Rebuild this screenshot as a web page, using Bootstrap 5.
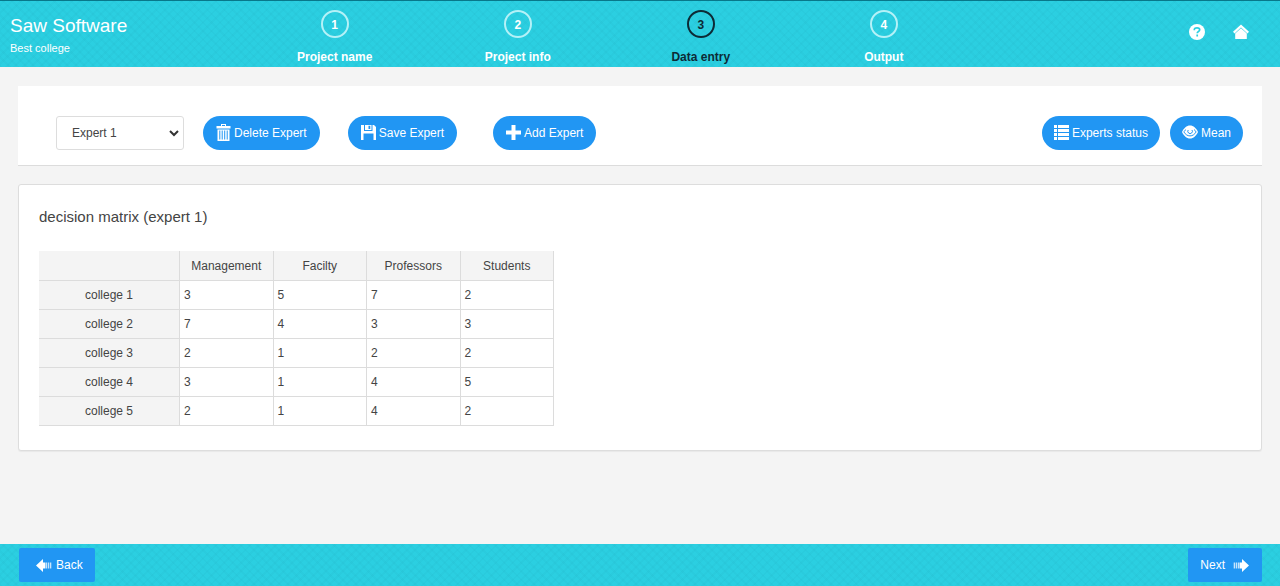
<!DOCTYPE html>
<html lang="en">
<head>
<meta charset="utf-8">
<meta name="viewport" content="width=device-width, initial-scale=1">
<title>Saw Software - Data entry</title>
<link href="https://cdn.jsdelivr.net/npm/bootstrap@5.3.0/dist/css/bootstrap.min.css" rel="stylesheet">
<style>
body{font-family:"Liberation Sans",Arial,sans-serif;font-size:12px;line-height:18px;color:#444;background:#f4f4f4}
.pattern{background-color:#2bcfe1;background-image:repeating-linear-gradient(45deg,rgba(0,90,110,.03) 0 2px,transparent 2px 6px),repeating-linear-gradient(-45deg,rgba(0,90,110,.03) 0 2px,transparent 2px 6px)}
.topbar{border-top:1px solid #08788a;min-height:67px}
.brand{width:19%;padding:13px 0 0 10px}
.brand h1{font-size:19px;line-height:23px;margin:0;font-weight:400}
.brand p{font-size:11px;line-height:22px;margin:0}
.steps{width:57.2%;padding-top:9px}
.steps a{color:#fff;font-weight:700;text-decoration:none}
.steps a.current{color:#0d2b36}
.ring{width:28px;height:28px;border:2px solid #b4f1f7;border-radius:50%;line-height:26px;margin-bottom:10px}
.current .ring{border-color:#0d2b36}
.tools{padding:23px 31px 0 0;gap:28px}
svg{fill:currentColor;display:block;flex:none}
.page{padding:19px 18px 60px}
.toolbar{padding:30px 19px 15px 38px;border-bottom:1px solid #dcdcdc;margin-bottom:18px}
.toolbar .form-select{width:128px;height:34px;padding:0 28px 0 15px;font-size:12px;color:#444;border-color:#ddd;border-radius:3px;margin-right:19px;background-position:right 4px center;background-size:10px 10px;background-image:url("data:image/svg+xml,%3Csvg xmlns='http://www.w3.org/2000/svg' viewBox='0 0 10 10'%3E%3Cpath d='M1 3l4 4 4-4' fill='none' stroke='%23333' stroke-width='2'/%3E%3C/svg%3E")}
.btn{--bs-btn-color:#fff;--bs-btn-bg:#2196f3;--bs-btn-hover-color:#fff;--bs-btn-hover-bg:#1584dd;--bs-btn-font-size:12px;--bs-btn-line-height:18px;--bs-btn-border-width:0;height:34px;display:inline-flex;align-items:center;justify-content:center;gap:3px;white-space:nowrap;--bs-btn-padding-x:12px;--bs-btn-padding-y:0}
.edit-actions .btn{--bs-btn-padding-x:13px}
.toolbar .btn svg{margin-top:-2px}
.edit-actions{gap:28px}
.view-actions{gap:10px}
.panel{border:1px solid #ddd;border-radius:3px;box-shadow:0 1px 1px rgba(0,0,0,.05);padding:20px 19px 24px 20px}
.panel h2{font-size:15px;line-height:24px;font-weight:400;margin:0 0 22px}
.matrix{width:515px;table-layout:fixed;border-collapse:separate;border-spacing:0;margin:0}
.matrix th,.matrix td{height:29px;padding:0 4px;border-right:1px solid #dcdcdc;border-bottom:1px solid #dcdcdc}
.matrix thead th{height:30px}
.matrix th{font-weight:400;text-align:center;background:#f4f4f4}
.matrix th:first-child{width:141px}
.bottombar{padding:4px 18px 4px 19px}
.bottombar .btn{--bs-btn-border-radius:2px}
</style>
</head>
<body>
<header class="topbar pattern d-flex text-white">
  <div class="brand"><h1>Saw Software</h1><p>Best college</p></div>
  <nav class="steps d-flex text-center" aria-label="Project steps">
    <a class="col-3" href="#name"><div class="ring mx-auto">1</div>Project name</a>
    <a class="col-3" href="#info"><div class="ring mx-auto">2</div>Project info</a>
    <a class="col-3 current" href="#entry" aria-current="step"><div class="ring mx-auto">3</div>Data entry</a>
    <a class="col-3" href="#output"><div class="ring mx-auto">4</div>Output</a>
  </nav>
  <div class="tools d-flex ms-auto">
    <a class="text-white" href="#help" aria-label="Help"><svg width="16" height="16" viewBox="0 0 16 16"><circle cx="8" cy="8" r="8"/><path d="M5.3 6.2V5.8C5.3 4.4 6.5 3.8 8 3.8s2.7.7 2.7 2c0 1.7-2.5 1.6-2.500 3.400M8.200 10.500v2" fill="none" stroke="#2bcfe1" stroke-width="1.7"/></svg></a>
    <a class="text-white" href="#home" aria-label="Home"><svg width="16" height="16" viewBox="0 0 16 16"><path d="M8 .5 16 7.800l-1.500 1.600L8 3.500 1.500 9.400 0 7.800zM8 4.200l5.800 5.300V15H2.200V9.500z"/></svg></a>
  </div>
</header>
<main class="page">
  <section class="toolbar bg-white d-flex align-items-center">
    <select class="form-select" aria-label="Expert"><option>Expert 1</option></select>
    <div class="edit-actions d-flex me-auto">
      <button class="btn rounded-pill" type="button"><svg width="15" height="17" viewBox="0 0 15 17"><path d="M5 0h5v2h4.500v2.500H.5V2H5zm1 1v1h3V1zM1.500 5.500h12V17h-12zM3.300 6.500v9h1v-9zm2.400 0v9h1v-9zm2.500 0v9h1v-9zm2.500 0v9h1v-9z" fill-rule="evenodd"/></svg>Delete Expert</button>
      <button class="btn rounded-pill" type="button"><svg width="15" height="15" viewBox="0 0 15 15"><path d="M0 0h3v6h8.500V0H13l2 2v13h-2.500V8.500h-10V15H0zm4 0h6.500v5H4zm3.500.8v3.200h1.800V.8z" fill-rule="evenodd"/></svg>Save Expert</button>
      <button class="btn rounded-pill ms-2" type="button"><svg width="15" height="15" viewBox="0 0 15 15"><path d="M5.500 0h4v5.500H15v4H9.500V15h-4V9.500H0v-4h5.500z"/></svg>Add Expert</button>
    </div>
    <div class="view-actions d-flex">
      <button class="btn rounded-pill" type="button"><svg width="15" height="15" viewBox="0 0 15 15"><path d="M0 0h3v3H0zm4 0h11v3H4zM0 4h3v3H0zm4 0h11v3H4zM0 8h3v3H0zm4 0h11v3H4zM0 12h3v3H0zm4 0h11v3H4z"/></svg>Experts status</button>
      <button class="btn rounded-pill" type="button"><svg width="16" height="14" viewBox="0 0 16 14"><path d="M0 7C2 3 4.500.5 8 .5s6 2.500 8 6.500c-2 4-4.500 6.500-8 6.500S2 11 0 7"/><path d="M4 4.600C2.800 5.300 2.200 6.200 1.900 7c1.600 2.500 3.600 3.900 6.100 3.900s4.500-1.400 6.100-3.900c-.3-.8-.9-1.700-2.100-2.400" fill="none" stroke="#2196f3" stroke-width="1"/><path d="M6.200 5a2.300 2.300 0 1 0 3.800 0" fill="none" stroke="#2196f3" stroke-width="1"/></svg>Mean</button>
    </div>
  </section>
  <section class="panel bg-white">
    <h2>decision matrix (expert 1)</h2>
    <table class="matrix">
      <thead><tr><th scope="col"></th><th scope="col">Management</th><th scope="col">Facilty</th><th scope="col">Professors</th><th scope="col">Students</th></tr></thead>
      <tbody>
        <tr><th scope="row">college 1</th><td>3</td><td>5</td><td>7</td><td>2</td></tr>
        <tr><th scope="row">college 2</th><td>7</td><td>4</td><td>3</td><td>3</td></tr>
        <tr><th scope="row">college 3</th><td>2</td><td>1</td><td>2</td><td>2</td></tr>
        <tr><th scope="row">college 4</th><td>3</td><td>1</td><td>4</td><td>5</td></tr>
        <tr><th scope="row">college 5</th><td>2</td><td>1</td><td>4</td><td>2</td></tr>
      </tbody>
    </table>
  </section>
</main>
<footer class="bottombar pattern fixed-bottom d-flex justify-content-between">
  <button class="btn ps-3" type="button"><svg width="18" height="13" viewBox="0 0 18 13"><path d="M8 0v3.500h2.500v6H8V13L1 6.500z"/><path d="M11 3.500h1.300v6H11zm2 0h1.300v6H13zm2 0h1.300v6H15z" opacity=".75"/></svg>Back</button>
  <button class="btn" type="button">Next<svg class="ms-1" width="18" height="13" viewBox="0 0 18 13"><path d="M10 0v3.500H7.500v6H10V13l7-6.500z"/><path d="M1.700 3.500H3v6H1.700zm2 0H5v6H3.700zm2 0H7v6H5.700z" opacity=".75"/></svg></button>
</footer>
<script src="https://cdn.jsdelivr.net/npm/bootstrap@5.3.0/dist/js/bootstrap.bundle.min.js"></script>
</body>
</html>
